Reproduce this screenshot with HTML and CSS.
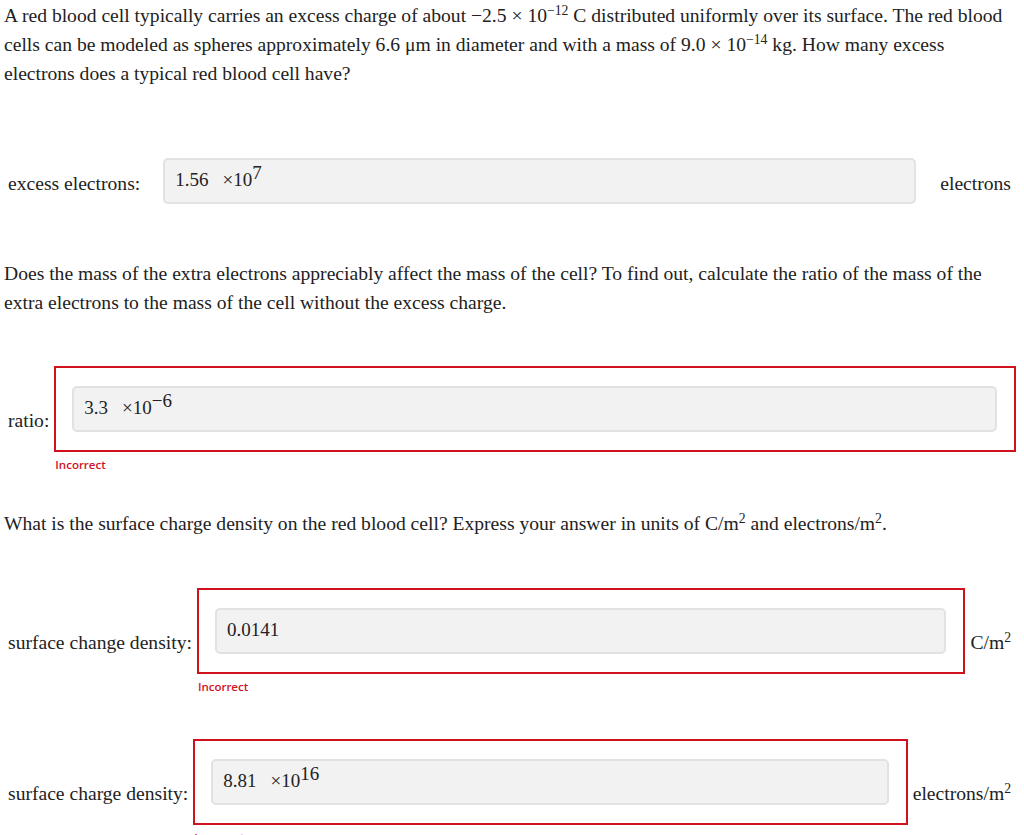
FILE: index.html
```html
<!DOCTYPE html>
<html>
<head>
<meta charset="utf-8">
<title>Red blood cell charge</title>
<link rel="stylesheet" href="styles.css">
</head>
<body>
<main class="page">
  <p class="text t1">A red blood cell typically carries an excess charge of about −2.5 × 10<sup>−12</sup> C distributed uniformly over its surface. The red blood cells can be modeled as spheres approximately 6.6 μm in diameter and with a mass of 9.0 × 10<sup>−14</sup> kg. How many excess electrons does a typical red blood cell have?</p>

  <section class="row r1">
    <span class="label">excess electrons:</span>
    <div class="answer">
      <div class="box plain">
        <div class="field"><span class="num">1.56</span><span class="exp">×10<span class="sup">7</span></span></div>
      </div>
    </div>
    <span class="unit">electrons</span>
  </section>

  <p class="text t2">Does the mass of the extra electrons appreciably affect the mass of the cell? To find out, calculate the ratio of the mass of the extra electrons to the mass of the cell without the excess charge.</p>

  <section class="row r2">
    <span class="label">ratio:</span>
    <div class="answer">
      <div class="box wrong">
        <div class="field"><span class="num">3.3</span><span class="exp">×10<span class="sup">−6</span></span></div>
      </div>
      <div class="feedback">Incorrect</div>
    </div>
  </section>

  <p class="text t3">What is the surface charge density on the red blood cell? Express your answer in units of C/m<sup>2</sup> and electrons/m<sup>2</sup>.</p>

  <section class="row r3">
    <span class="label">surface change density:</span>
    <div class="answer">
      <div class="box wrong">
        <div class="field"><span class="num">0.0141</span></div>
      </div>
      <div class="feedback">Incorrect</div>
    </div>
    <span class="unit">C/m<sup>2</sup></span>
  </section>

  <section class="row r4">
    <span class="label">surface charge density:</span>
    <div class="answer">
      <div class="box wrong">
        <div class="field"><span class="num">8.81</span><span class="exp">×10<span class="sup">16</span></span></div>
      </div>
      <div class="feedback">Incorrect</div>
    </div>
    <span class="unit">electrons/m<sup>2</sup></span>
  </section>
</main>
</body>
</html>
```

FILE: styles.css
```css
html, body {
  margin: 0;
  padding: 0;
  background: #ffffff;
}

body {
  overflow: hidden;
}

.page {
  display: block;
  width: 1024px;
  height: 835px;
  box-sizing: border-box;
  padding: 1px 8px 0 4px;
  font-family: "Liberation Serif", "Times New Roman", Times, serif;
  font-size: 19.6px;
  color: #222222;
}

.text {
  margin: 0;
  line-height: 29px;
}

.page sup {
  font-size: 0.7em;
  line-height: 0;
  vertical-align: 0.5em;
}

.t2 { margin-top: 35px; }
.t3 { margin-top: 33px; }

.row {
  display: flex;
  align-items: center;
  padding: 0 0 0 4px;
}

.r1 { margin-top: 50px; }
.r2 { margin-top: 49px; }
.r3 { margin-top: 50px; }
.r4 { margin-top: 41px; }

.label {
  margin-right: 5px;
  white-space: nowrap;
}

.r1 .label,
.r1 .unit {
  padding-top: 6px;
}

.answer {
  flex: 1;
  display: flex;
  flex-direction: column;
}

.box {
  border: 2px solid transparent;
  padding: 18px 17px 18px 16px;
}

.box.wrong {
  border-color: #d0121f;
}

.field {
  height: 46px;
  box-sizing: border-box;
  background: #f2f2f2;
  border: 2px solid #e2e2e2;
  border-radius: 5px;
  padding: 0 10px 3px 10px;
  display: flex;
  align-items: center;
  font-size: 19px;
  color: #222222;
}

.exp {
  margin-left: 14px;
}

.field .sup {
  position: relative;
  top: -7px;
}

.feedback {
  height: 24px;
  box-sizing: border-box;
  padding: 5px 0 0 1px;
  font-family: "Open Sans", "Liberation Sans", sans-serif;
  font-weight: 600;
  font-size: 11.5px;
  line-height: 16px;
  color: #d0121f;
}

.unit {
  margin: 0 5px;
  white-space: nowrap;
}
```
